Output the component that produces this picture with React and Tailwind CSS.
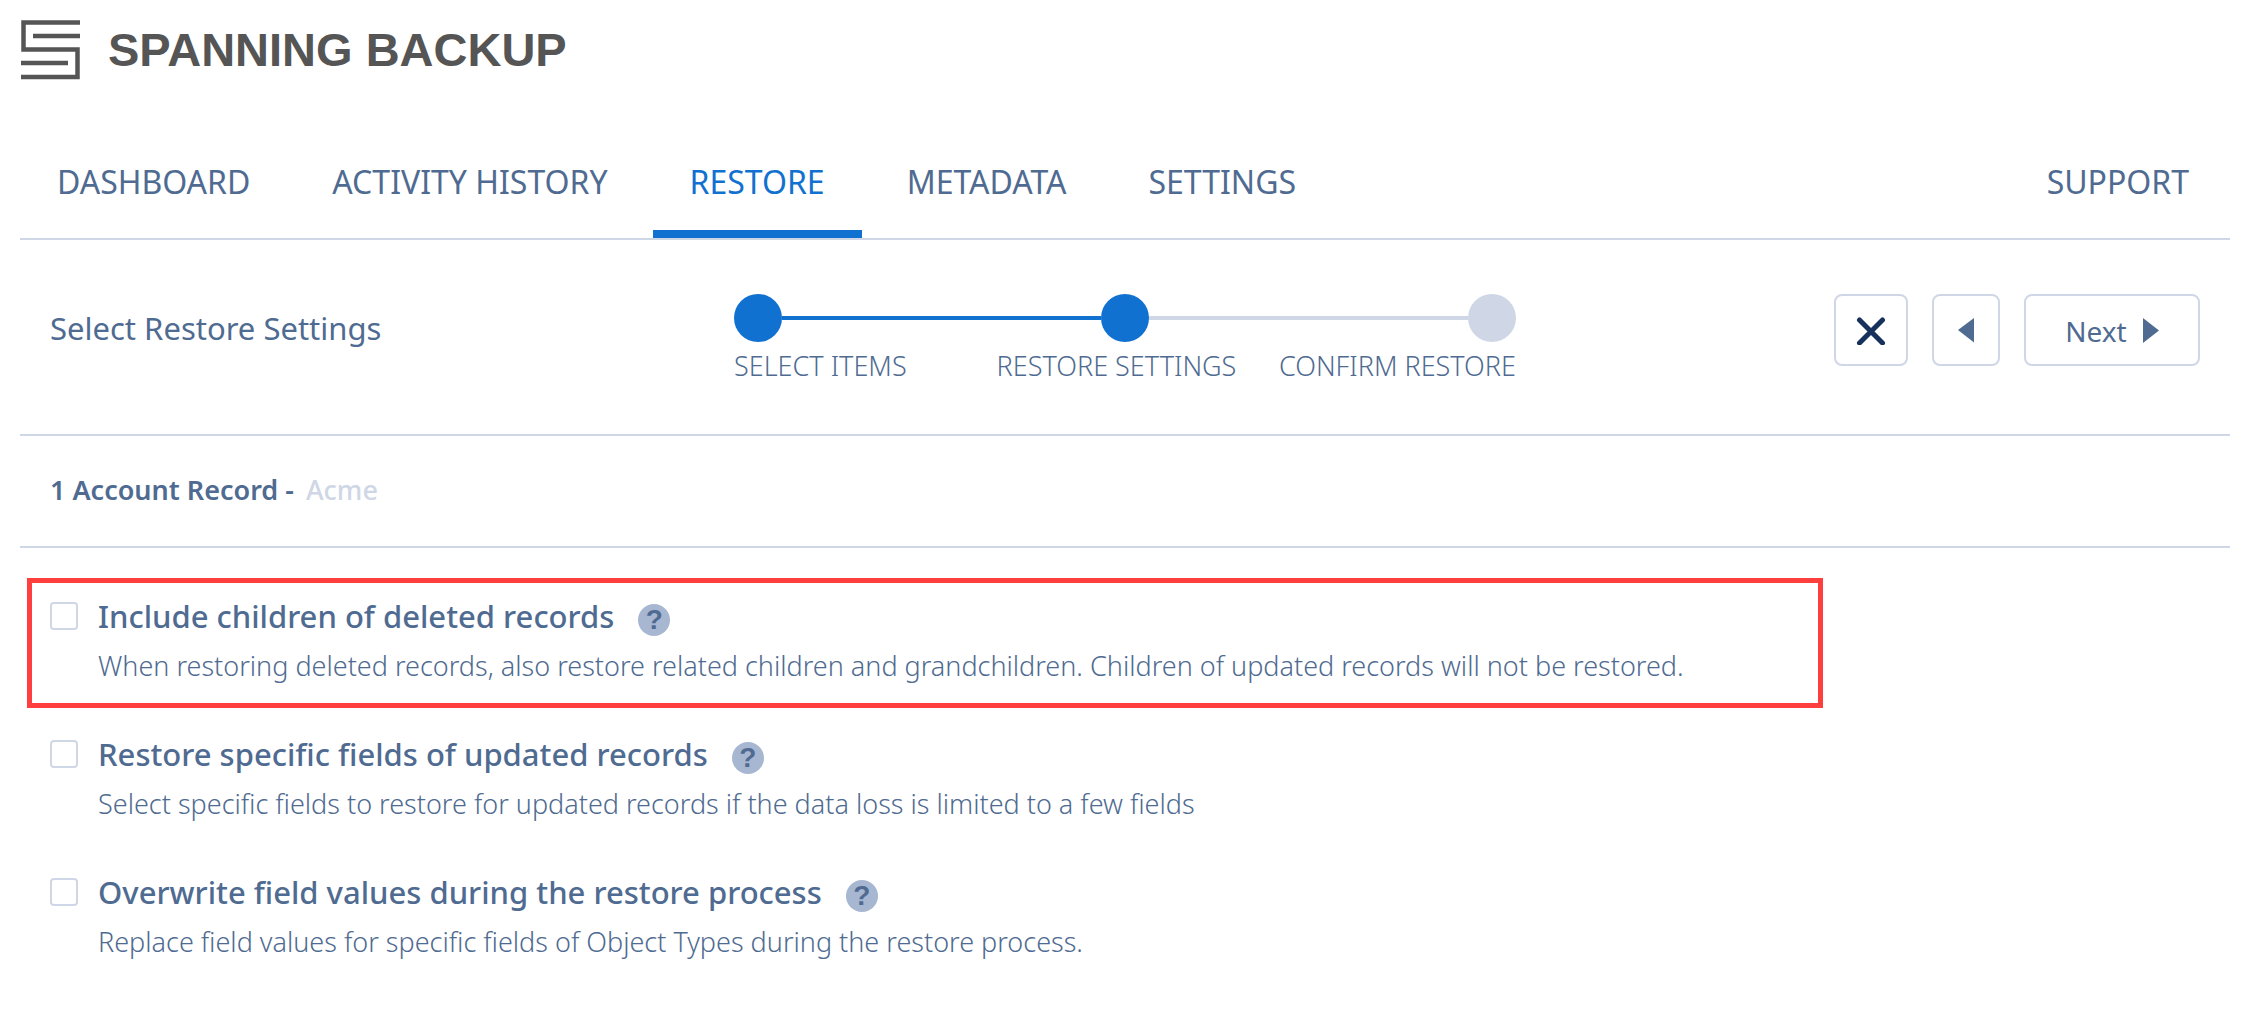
import React, { useState } from 'react';

const TABS = ['DASHBOARD', 'ACTIVITY HISTORY', 'RESTORE', 'METADATA', 'SETTINGS'];

const OPTIONS = [
  {
    id: 'children',
    title: 'Include children of deleted records',
    description: 'When restoring deleted records, also restore related children and grandchildren. Children of updated records will not be restored.',
    highlighted: true,
  },
  {
    id: 'fields',
    title: 'Restore specific fields of updated records',
    description: 'Select specific fields to restore for updated records if the data loss is limited to a few fields',
  },
  {
    id: 'overwrite',
    title: 'Overwrite field values during the restore process',
    description: 'Replace field values for specific fields of Object Types during the restore process.',
  },
];

function Logo() {
  return (
    <svg width="60" height="60" viewBox="0 0 60 60" fill="none" stroke="#555" strokeWidth="4.5" aria-hidden="true">
      <path d="M60 2.5H3.5V29.5H57.5V57H1" />
      <path d="M13 16H60" />
      <path d="M1 43H48" />
    </svg>
  );
}

function Header() {
  return (
    <header className="flex items-center gap-[28px] pt-5 pb-[78px]">
      <Logo />
      <h1 className="font-['Liberation_Sans',sans-serif] text-[47px] leading-[60px] font-bold text-[#555]">SPANNING BACKUP</h1>
    </header>
  );
}

function Tab({ label, active }) {
  return (
    <a
      href="#"
      aria-current={active ? 'page' : undefined}
      className={`px-[37px] pb-6 border-b-8 text-[32px] leading-[48px] ${active ? 'border-[#1171d0] text-[#1171d0]' : 'border-transparent'}`}
    >
      {label}
    </a>
  );
}

function Stepper() {
  return (
    <div className="w-[782px]">
      <div className="flex items-center">
        <span className="size-12 rounded-full bg-[#1171d0]" />
        <span className="h-1 flex-1 bg-[#1171d0]" />
        <span className="size-12 rounded-full bg-[#1171d0]" />
        <span className="h-1 flex-1 bg-[#cfd7e6]" />
        <span className="size-12 rounded-full bg-[#cfd7e6]" />
      </div>
      <div className="flex justify-between pt-[6px] text-[27px] leading-9 font-light">
        <span className="w-[220px]">SELECT ITEMS</span>
        <span>RESTORE SETTINGS</span>
        <span>CONFIRM RESTORE</span>
      </div>
    </div>
  );
}

function WizardButtons() {
  return (
    <div className="flex justify-end gap-6 pr-[30px] text-[28px]">
      <button type="button" aria-label="Cancel" className="flex h-[72px] w-[74px] items-center justify-center rounded-lg border-2 border-[#cfd7e6]">
        <svg width="30" height="30" viewBox="0 0 30 30" stroke="#16325c" strokeWidth="5" strokeLinecap="round">
          <path d="M3.5 5L26.5 28M26.5 5L3.5 28" />
        </svg>
      </button>
      <button type="button" aria-label="Back" className="flex h-[72px] w-[68px] items-center justify-center rounded-lg border-2 border-[#cfd7e6]">
        <svg width="16" height="26" viewBox="0 0 16 26" fill="#4f6b91">
          <path d="M16 1V25.500L0 13Z" />
        </svg>
      </button>
      <button type="button" className="flex h-[72px] w-[176px] items-center justify-center gap-4 rounded-lg border-2 border-[#cfd7e6] pt-0.5">
        Next
        <svg width="16" height="26" viewBox="0 0 16 26" fill="#4f6b91">
          <path d="M0 0V25L16 12.500Z" />
        </svg>
      </button>
    </div>
  );
}

function Option({ option, checked, onChange }) {
  return (
    <div className={`max-w-[1796px] border-[5px] pt-[11px] pr-4 pb-[17px] pl-[18px] ${option.highlighted ? 'border-[#ff3e3e]' : 'border-transparent'}`}>
      <div className="flex items-center">
        <input
          type="checkbox"
          id={option.id}
          checked={checked}
          onChange={onChange}
          className="size-7 appearance-none rounded border-2 border-[#cfd7e6] checked:bg-[#1171d0]"
        />
        <label htmlFor={option.id} className="pl-5 text-[31px] leading-[44px] font-medium">{option.title}</label>
        <button
          type="button"
          aria-label={`Help: ${option.title}`}
          className="mt-2 ml-6 size-8 rounded-full bg-[#a8b7d1] text-center font-['Liberation_Sans',sans-serif] text-[28px] leading-8 font-bold"
        >
          ?
        </button>
      </div>
      <p className="pt-2 pl-12 text-[27px] leading-10 font-light">{option.description}</p>
    </div>
  );
}

export default function App() {
  const [selected, setSelected] = useState({});

  const toggle = (id) => {
    setSelected({ ...selected, [id]: !selected[id] });
  };

  return (
    <div className="min-h-screen bg-white pr-[30px] pl-5 font-['Noto_Sans',sans-serif] text-[#4f6b91]">
      <Header />

      <nav className="flex gap-2 border-b-2 border-[#cfd7e6] pr-1">
        {TABS.map((label) => (
          <Tab key={label} label={label} active={label === 'RESTORE'} />
        ))}
        <div className="ml-auto flex">
          <Tab label="SUPPORT" />
        </div>
      </nav>

      <main>
        <section className="grid grid-cols-[1fr_auto_1fr] items-start border-b-2 border-[#cfd7e6] pt-[54px] pb-[50px]">
          <h2 className="pl-[30px] text-[31px] leading-[68px]">Select Restore Settings</h2>
          <Stepper />
          <WizardButtons />
        </section>

        <section className="flex gap-3 border-b-2 border-[#cfd7e6] pt-9 pb-[38px] pl-[30px] text-[27px] leading-9">
          <span className="font-semibold">1 Account Record -</span>
          <span className="font-medium text-[#cfd7e6]">Acme</span>
        </section>

        <section className="flex flex-col gap-2 pt-[30px] pl-[7px]">
          {OPTIONS.map((option) => (
            <Option
              key={option.id}
              option={option}
              checked={!!selected[option.id]}
              onChange={() => toggle(option.id)}
            />
          ))}
        </section>
      </main>
    </div>
  );
}
